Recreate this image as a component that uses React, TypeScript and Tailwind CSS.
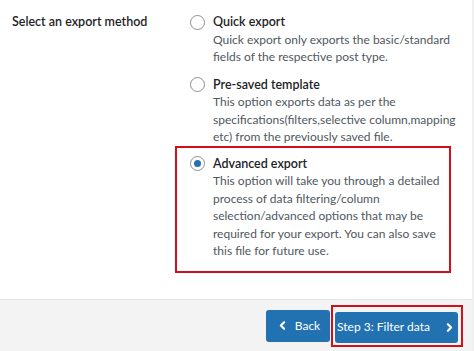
import { ChevronLeft, ChevronRight } from "lucide-react";

const options = [
  {
    id: "quick",
    title: "Quick export",
    description: "Quick export only exports the basic/standard fields of the respective post type.",
    checked: false,
    highlight: false
  },
  {
    id: "template",
    title: "Pre-saved template",
    description:
      "This option exports data as per the specifications(filters,selective column,mapping etc) from the previously saved file.",
    checked: false,
    highlight: false
  },
  {
    id: "advanced",
    title: "Advanced export",
    description:
      "This option will take you through a detailed process of data filtering/column selection/advanced options that may be required for your export. You can also save this file for future use.",
    checked: true,
    highlight: true
  }
] as const;

function Radio({ checked }: { checked: boolean }) {
  return (
    <span className="mt-[1.5px] flex h-[15px] w-[15px] shrink-0 items-center justify-center rounded-full border border-[#8c8f94] bg-white">
      {checked && <span className="h-[7px] w-[7px] rounded-full bg-[#2271b1]" />}
    </span>
  );
}

export default function App() {
  return (
    <main
      className="flex h-[351px] w-[474px] overflow-hidden bg-[#f0f0f1] text-[12px] leading-[17.5px] text-[#3c434a]"
      style={{ fontFamily: 'Lato, "Noto Sans", sans-serif' }}
    >
      <div className="flex w-[472px] flex-col bg-white">
        <section className="flex min-h-0 flex-1 pt-[13px]">
          <div className="w-[175px] shrink-0 pl-3 text-[12.5px] font-semibold text-[#1d2327]">
            Select an export method
          </div>
          <div className="flex flex-col">
            {options.map((opt) => (
              <div
                key={opt.id}
                className={
                  opt.highlight
                    ? "flex w-[276px] gap-[8px] border-2 border-[#d0111b] pb-[11px] pl-[13px] pr-2 pt-[7px]"
                    : "flex w-[297px] gap-[8px] pl-[15px] pr-2 [&:first-child]:mb-[10px]"
                }
              >
                <Radio checked={opt.checked} />
                <div>
                  <div className="text-[12.5px] font-semibold text-[#1d2327]">{opt.title}</div>
                  <p className="text-[#50575e]">{opt.description}</p>
                </div>
              </div>
            ))}
          </div>
        </section>
        <footer className="flex h-[52px] shrink-0 items-center justify-end gap-[1px] border-t border-[#e2e4e7] bg-[#f3f3f4] pr-[9px]">
          <button className="flex h-[32px] w-[64px] items-center justify-center gap-[6px] whitespace-nowrap rounded-[3px] bg-[#2271b1] text-[12px] text-white">
            <ChevronLeft size={13} strokeWidth={4} />
            Back
          </button>
          <div className="border-2 border-[#d0111b] pb-[2px] pl-[2px] pr-[3px] pt-[5px]">
            <button className="flex h-[31px] w-[123px] items-center justify-center gap-[13px] whitespace-nowrap rounded-[3px] bg-[#2271b1] text-[12px] text-white">
              Step 3: Filter data
              <ChevronRight size={13} strokeWidth={4} />
            </button>
          </div>
        </footer>
      </div>
    </main>
  );
}
